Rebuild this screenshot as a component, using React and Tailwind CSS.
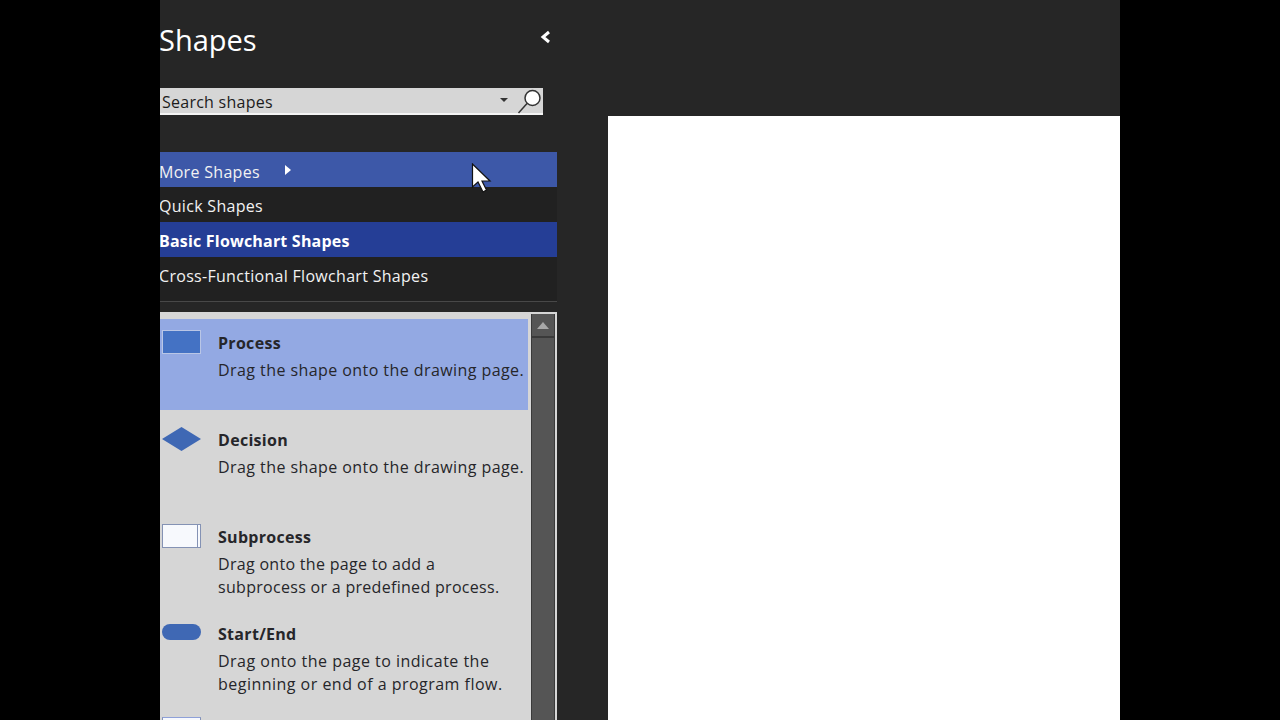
import React from 'react';

const font = { fontFamily: '"Open Sans", "Noto Sans", sans-serif' };

const shapes = [
  { name: 'Process', lines: ['Drag the shape onto the drawing page.'], icon: 'process', active: true },
  { name: 'Decision', lines: ['Drag the shape onto the drawing page.'], icon: 'decision' },
  { name: 'Subprocess', lines: ['Drag onto the page to add a', 'subprocess or a predefined process.'], icon: 'subprocess', tracking: 'tracking-[0.3px]' },
  { name: 'Start/End', lines: ['Drag onto the page to indicate the', 'beginning or end of a program flow.'], icon: 'startend', tracking: 'tracking-[0.48px]' },
];

const ShapeIcon = ({ type }) => {
  if (type === 'process') {
    return <div className="h-[24px] w-[39px] border border-[#b9c6e6] bg-[#4472c4]" />;
  }
  if (type === 'decision') {
    return (
      <svg width="39" height="24" viewBox="0 0 39 24">
        <polygon points="0,12 19.5,0 39,12 19.5,24" fill="#3f68b4" />
      </svg>
    );
  }
  if (type === 'subprocess') {
    return (
      <div className="flex h-[24px] w-[39px] justify-end border border-[#8492b4] bg-[#f7f9fd]">
        <div className="mr-[2px] w-px bg-[#8492b4]" />
      </div>
    );
  }
  return <div className="mt-[3px] h-[16px] w-[39px] rounded-full bg-[#3f68b4]" />;
};

const ShapeItem = ({ item }) => (
  <div className={`flex h-[91px] w-[368px] shrink-0 pl-[2px] pt-[12px] ${item.active ? 'bg-[#93a9e3]' : ''}`}>
    <div className="-mt-px w-[56px] shrink-0">
      <ShapeIcon type={item.icon} />
    </div>
    <div className={`text-[16px] leading-[23px] whitespace-nowrap text-[#26262a] ${item.tracking || 'tracking-[0.43px]'}`}>
      <div className="mb-[4px] font-bold leading-[24px] tracking-[0.3px]">{item.name}</div>
      {item.lines.map((line) => (
        <div key={line}>{line}</div>
      ))}
    </div>
  </div>
);

const NavRow = ({ label, className = '', children }) => (
  <div className={`-ml-px flex h-[35px] items-center text-[16px] whitespace-nowrap ${className}`}>
    {label}
    {children}
  </div>
);

export default function App() {
  return (
    <div className="flex h-[720px] w-[1280px] overflow-hidden bg-black" style={font}>
      <div className="ml-[160px] flex h-full w-[960px] bg-[#262626]">
        {/* Shapes pane */}
        <div className="flex h-full w-[397px] shrink-0 flex-col overflow-hidden text-[#f2f2f2]">
          <div className="flex h-[88px] shrink-0 items-start justify-between pt-[18px]">
            <div className="-ml-px text-[29px] leading-[44px] font-normal text-white">Shapes</div>
            <svg className="mr-[6px] mt-[12px]" width="11" height="14" viewBox="0 0 11 14">
              <path d="M9 2 L3 7 L9 12" fill="none" stroke="#ffffff" strokeWidth="3" />
            </svg>
          </div>

          <div className="flex h-[27px] w-[383px] shrink-0 items-center border-b-2 border-[#f4f4f4] bg-[#d6d6d6] pl-[2px] pt-[3px] text-[16px] tracking-[0.25px] text-[#1c1c1c]">
            <span className="flex-1">Search shapes</span>
            <svg className="mb-[3px] mr-[35px]" width="8" height="5" viewBox="0 0 8 5">
              <polygon points="0,0 8,0 4,4" fill="#333333" />
            </svg>
            <svg className="absolute left-[517px] top-[88px]" width="26" height="26" viewBox="0 0 26 26">
              <circle cx="15.5" cy="10" r="7.5" fill="#ffffff" stroke="#333333" strokeWidth="1.5" />
              <path d="M10 15.5 L1.5 25" stroke="#333333" strokeWidth="1.5" />
            </svg>
          </div>

          <div className="mt-[37px] flex shrink-0 flex-col bg-[#212121] tracking-[0.3px] text-[#f2f2f2]">
            <NavRow label="More Shapes" className="bg-[#3d58a8] pt-[4px]">
              <svg className="mb-[4px] ml-[25px]" width="6" height="10" viewBox="0 0 6 10">
                <polygon points="0,0 6,5 0,10" fill="#ffffff" />
              </svg>
            </NavRow>
            <NavRow label="Quick Shapes" className="pt-[2px]" />
            <NavRow label="Basic Flowchart Shapes" className="bg-[#253e96] pt-[2px] font-bold tracking-[0.2px] text-white" />
            <NavRow label="Cross-Functional Flowchart Shapes" className="pt-[2px]" />
            <div className="h-[9px] bg-[#212121]" />
          </div>

          <div className="h-px shrink-0 bg-[#484848]" />

          <div className="mt-[10px] flex min-h-0 flex-1 border-r border-t-2 border-[#d6d6d6] bg-[#d6d6d6]">
            <div className="flex w-[371px] shrink-0 flex-col gap-[6px] overflow-hidden pt-[5px]">
              {shapes.map((item) => (
                <ShapeItem key={item.name} item={item} />
              ))}
              <div className="ml-[2px] mt-[10px] h-[24px] w-[39px] shrink-0 border border-[#8492b4] border-t-[#8ea0d8] bg-[#f7f9fd]" />
            </div>
            <div className="flex w-[24px] shrink-0 flex-col border-x border-[#3a3a3a] bg-[#555555]">
              <div className="flex h-[24px] items-center justify-center border-b-2 border-[#3a3a3a]">
                <svg width="12" height="7" viewBox="0 0 12 7">
                  <polygon points="0,7 6,0 12,7" fill="#a8a8a8" />
                </svg>
              </div>
            </div>
          </div>
        </div>

        {/* Drawing area */}
        <div className="ml-[51px] mt-[116px] flex-1 bg-white" />
      </div>

      {/* Mouse pointer */}
      <svg className="absolute left-[471px] top-[163px]" width="22" height="31" viewBox="0 0 22 31">
        <path d="M1.5 1 L1.5 24 L7 19 L12 29 L15.5 27 L11 18 L19 18 Z" fill="#ffffff" stroke="#111111" strokeWidth="1.2" />
      </svg>
    </div>
  );
}
